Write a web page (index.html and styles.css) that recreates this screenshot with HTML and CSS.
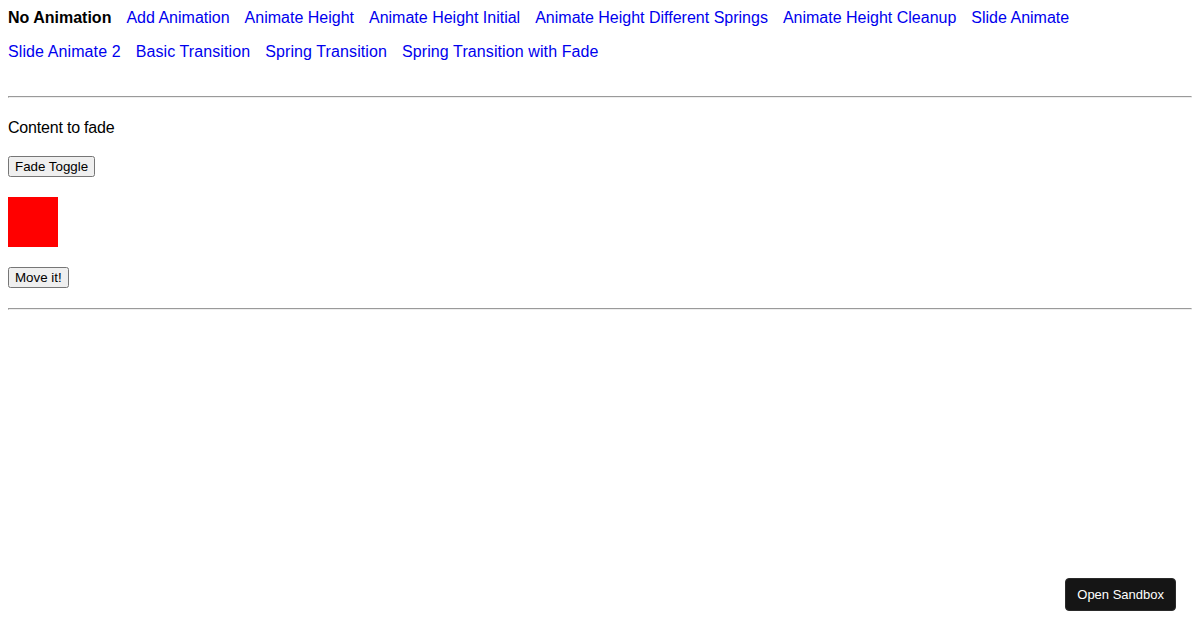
FILE: index.html
```html
<!DOCTYPE html>
<html>
<head>
<meta charset="utf-8">
<link rel="stylesheet" href="styles.css">
</head>
<body>
<nav class="nav">
  <a class="nav-link active">No Animation</a>
  <a class="nav-link" href="#">Add Animation</a>
  <a class="nav-link" href="#">Animate Height</a>
  <a class="nav-link" href="#">Animate Height Initial</a>
  <a class="nav-link" href="#">Animate Height Different Springs</a>
  <a class="nav-link" href="#">Animate Height Cleanup</a>
  <a class="nav-link" href="#">Slide Animate</a>
  <a class="nav-link wide" href="#">Slide Animate 2</a>
  <a class="nav-link wide" href="#">Basic Transition</a>
  <a class="nav-link wide" href="#">Spring Transition</a>
  <a class="nav-link wide" href="#">Spring Transition with Fade</a>
</nav>
<hr class="rule">
<main class="demo">
  <div class="fade-text">Content to fade</div>
  <div><button class="btn">Fade Toggle</button></div>
  <div class="box"></div>
  <div><button class="btn">Move it!</button></div>
</main>
<hr class="rule">
<button class="sandbox">Open Sandbox</button>
</body>
</html>
```
FILE: styles.css
```css
body {
  margin: 8px;
  font-family: "Liberation Sans", Arial, sans-serif;
  font-size: 16px;
  color: #000;
  background: #fff;
}
.nav {
  display: flex;
  flex-wrap: wrap;
  column-gap: 15px;
  row-gap: 16px;
  padding-top: 1px;
  padding-bottom: 35px;
}
.nav-link {
  color: #0000ee;
  text-decoration: none;
}
.nav-link.wide {
  letter-spacing: 0.1px;
}
.nav-link.active {
  color: #000;
  font-weight: bold;
}
.rule {
  margin: 0;
}
.demo {
  display: flex;
  flex-direction: column;
  align-items: flex-start;
  gap: 20px;
  padding: 20px 0;
}
.fade-text {
  letter-spacing: -0.2px;
  margin: 1px 0 -1px;
}
.btn {
  font-family: "Liberation Sans", Arial, sans-serif;
  padding: 1px 5px;
}
.box {
  width: 50px;
  height: 50px;
  background: #ff0000;
}
.sandbox {
  position: fixed;
  right: 24px;
  bottom: 19px;
  height: 33px;
  padding: 0 11px;
  background: #151515;
  color: #fff;
  border: 1px solid #2a2a2a;
  border-radius: 4px;
  font-family: "Liberation Sans", Arial, sans-serif;
  font-size: 13px;
}
```
